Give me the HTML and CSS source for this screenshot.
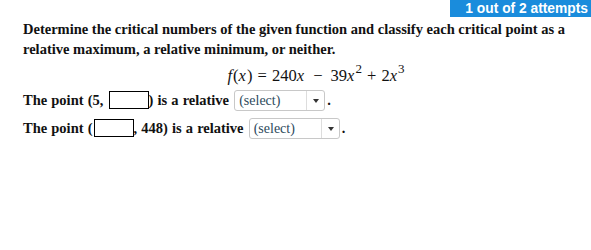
FILE: index.html
```html
<!DOCTYPE html>
<html lang="en">
<head>
  <meta charset="UTF-8">
  <meta name="viewport" content="width=device-width, initial-scale=1.0">
  <title>Critical numbers</title>
  <link rel="stylesheet" href="styles.css">
</head>
<body>
  <div class="attempts">1 out of 2 attempts</div>

  <div class="question">
    <p class="prompt">Determine the critical numbers of the given function and classify each critical point as a relative maximum, a relative minimum, or neither.</p>

    <p class="formula"><i>f</i>(<i>x</i>) = 240<i>x</i> <span class="op">&minus;</span> 39<i>x</i><sup>2</sup> + 2<i>x</i><sup>3</sup></p>

    <p class="row">The point (5, <span class="blank"></span>) is a relative <span class="pick"><span class="pick-text">(select)</span><span class="pick-arrow"></span></span>.</p>
    <p class="row">The point (<span class="blank"></span>, 448) is a relative <span class="pick"><span class="pick-text">(select)</span><span class="pick-arrow"></span></span>.</p>
  </div>
</body>
</html>
```

FILE: styles.css
```css
* {
  margin: 0; padding: 0; box-sizing: border-box;
}
body {
  width: 591px; height: 250px;
  background: #fff;
  font-family: "Liberation Serif", "Times New Roman", serif;
  color: #111;
  position: relative;
}
.attempts {
  position: absolute;
  right: 0; top: 0;
  width: 141px; height: 17px;
  background: #1a8cdc;
  color: #fff;
  font-family: "Liberation Sans", Arial, sans-serif;
  font-weight: bold;
  font-size: 13.8px;
  line-height: 17px;
  text-align: right;
  padding-right: 3px;
}
.question {
  padding: 19px 10px 0 23px;
  font-weight: bold;
  font-size: 14.5px;
}
.prompt {
  line-height: 20px;
}
.formula {
  font-weight: normal;
  font-size: 16.5px;
  text-align: center;
  margin: 7px 0 0 28px;
  line-height: 20px;
  word-spacing: 1px;
}
.formula i {
  margin-right: 1px;
}
.formula .op {
  margin: 0 3px;
}
.formula sup {
  font-size: 13px;
  vertical-align: 8px;
  line-height: 0;
}
.row {
  display: flex;
  align-items: center;
  height: 28px;
  white-space: pre;
  word-spacing: 0.5px;
}
.blank {
  display: inline-block;
  width: 40px; height: 18px;
  border: 1px solid #000;
  margin-left: 1px;
}
.pick {
  display: inline-flex;
  align-items: stretch;
  width: 91px; height: 21px;
  border: 1px solid #c8c8c8;
  border-radius: 3px;
  margin-left: 1px;
  margin-right: 2px;
  font-weight: normal;
  word-spacing: 0;
}
.pick-text {
  flex: 1;
  padding-left: 4px;
  color: #2d4a5c;
  font-size: 14px;
  line-height: 19px;
}
.pick-arrow {
  width: 18px;
  border-left: 1px solid #ddd;
  position: relative;
}
.pick-arrow::after {
  content: "";
  position: absolute;
  left: 6px; top: 8px;
  border-left: 3px solid transparent;
  border-right: 3px solid transparent;
  border-top: 4px solid #333;
}
```
